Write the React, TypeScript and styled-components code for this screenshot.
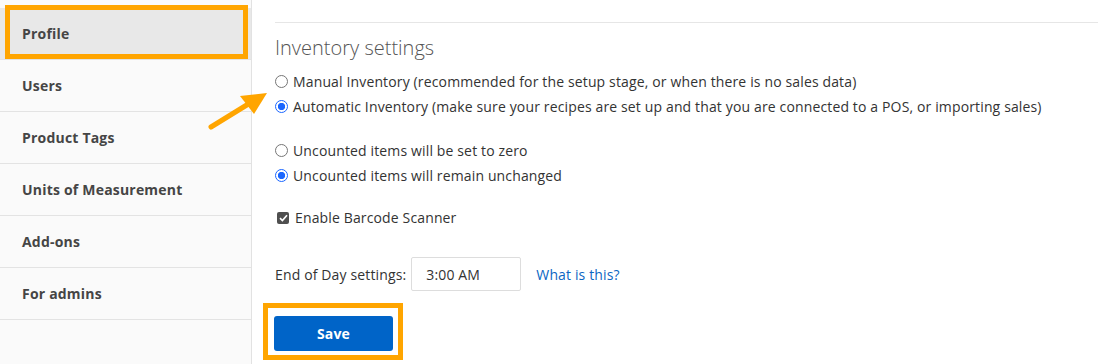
import styled, { createGlobalStyle } from "styled-components";

const GlobalStyle = createGlobalStyle`
  html, body {
    margin: 0;
    padding: 0;
    background: #ffffff;
  }
  body {
    font-family: "Open Sans", "Liberation Sans", sans-serif;
    color: #333333;
  }
`;

const ANNOTATION = "#ffa500";

const Page = styled.div`
  position: relative;
  display: grid;
  grid-template-columns: 252px 1fr;
  height: 364px;
  overflow: hidden;
`;

const Sidebar = styled.nav`
  background: #fafafa;
  border-right: 1px solid #e2e2e2;
  padding-top: 8px;
`;

const NavList = styled.ul`
  list-style: none;
  margin: 0;
  padding: 0;
`;

const NavItem = styled.li<{ $active?: boolean; $marked?: boolean }>`
  position: relative;
  height: 52px;
  box-sizing: border-box;
  display: flex;
  align-items: center;
  padding-left: 22px;
  border-bottom: 1px solid #e3e3e3;
  background: ${({ $active }) => ($active ? "#e8e8e8" : "transparent")};
  font-size: 14px;
  font-weight: 700;
  letter-spacing: 0.2px;
  color: #454545;

  &::after {
    content: "";
    display: ${({ $marked }) => ($marked ? "block" : "none")};
    position: absolute;
    top: -3px;
    left: 5px;
    right: 3px;
    bottom: 0;
    border: 5px solid ${ANNOTATION};
  }
`;

const Main = styled.main`
  padding-left: 23px;
  padding-top: 22px;
  display: flex;
  flex-direction: column;
  align-items: flex-start;
  letter-spacing: 0.14px;
`;

const Divider = styled.hr`
  align-self: stretch;
  margin: 0 1px 0 0;
  border: 0;
  border-top: 1px solid #e6e6e6;
`;

const Heading = styled.h2`
  margin: 10px 0 6px;
  font-size: 20px;
  line-height: 30px;
  font-weight: 300;
  letter-spacing: 0;
  color: #555555;
`;

const OptionGroup = styled.div<{ $gapAfter: number }>`
  display: flex;
  flex-direction: column;
  margin-bottom: ${({ $gapAfter }) => $gapAfter}px;
`;

const OptionRow = styled.label`
  display: flex;
  align-items: center;
  height: 25px;
  font-size: 14px;
  color: #333333;
`;

const Radio = styled.span<{ $checked?: boolean }>`
  box-sizing: border-box;
  width: 13px;
  height: 13px;
  margin-right: 5px;
  border-radius: 50%;
  border: 1px solid ${({ $checked }) => ($checked ? "#1a66ff" : "#767676")};
  background: ${({ $checked }) =>
    $checked
      ? "radial-gradient(circle, #1a66ff 0 3.4px, #ffffff 3.9px)"
      : "#ffffff"};
  flex-shrink: 0;
`;

const CheckRow = styled.label`
  display: flex;
  align-items: center;
  height: 25px;
  padding-left: 2px;
  font-size: 14px;
  color: #333333;
  margin-bottom: 27px;
`;

const CheckBox = styled.span`
  box-sizing: border-box;
  width: 12px;
  height: 12px;
  margin-right: 6px;
  border-radius: 2px;
  background: #4f4f4f;
  display: flex;
  align-items: center;
  justify-content: center;
`;

const FieldRow = styled.div`
  display: flex;
  align-items: center;
  font-size: 14px;
  color: #333333;
  margin-bottom: 12px;
`;

const FieldLabel = styled.span`
  margin-right: 5px;
`;

const TimeInput = styled.div`
  box-sizing: border-box;
  width: 110px;
  height: 34px;
  border: 1px solid #dddddd;
  border-radius: 2px;
  padding-left: 14px;
  display: flex;
  align-items: center;
  margin-right: 15px;
`;

const HelpLink = styled.a`
  color: #0b66c3;
  text-decoration: none;
`;

const MarkFrame = styled.div`
  margin-left: -12px;
  border: 5px solid ${ANNOTATION};
  padding: 8px 5px 4px 6px;
`;

const SaveButton = styled.button`
  width: 119px;
  height: 35px;
  border: 0;
  border-radius: 3px;
  background: #0064c8;
  color: #ffffff;
  font-family: inherit;
  font-size: 14px;
  font-weight: 700;
  letter-spacing: 0.2px;
`;

const ArrowMark = styled.svg`
  position: absolute;
  left: 200px;
  top: 84px;
`;

function CheckIcon() {
  return (
    <svg width="9" height="8" viewBox="0 0 9 8">
      <path d="M1 4.2 L3.4 6.5 L8 1.3" stroke="#fff" strokeWidth="1.7" fill="none" />
    </svg>
  );
}

const navItems = [
  "Profile",
  "Users",
  "Product Tags",
  "Units of Measurement",
  "Add-ons",
  "For admins",
];

export default function App() {
  return (
    <>
      <GlobalStyle />
      <Page>
        <Sidebar>
          <NavList>
            {navItems.map((item, i) => (
              <NavItem key={item} $active={i === 0} $marked={i === 0}>
                {item}
              </NavItem>
            ))}
          </NavList>
        </Sidebar>
        <Main>
          <Divider />
          <Heading>Inventory settings</Heading>
          <OptionGroup $gapAfter={19}>
            <OptionRow>
              <Radio />
              Manual Inventory (recommended for the setup stage, or when there is no sales data)
            </OptionRow>
            <OptionRow>
              <Radio $checked />
              Automatic Inventory (make sure your recipes are set up and that you are connected to a POS, or importing sales)
            </OptionRow>
          </OptionGroup>
          <OptionGroup $gapAfter={17}>
            <OptionRow>
              <Radio />
              Uncounted items will be set to zero
            </OptionRow>
            <OptionRow>
              <Radio $checked />
              Uncounted items will remain unchanged
            </OptionRow>
          </OptionGroup>
          <CheckRow>
            <CheckBox>
              <CheckIcon />
            </CheckBox>
            Enable Barcode Scanner
          </CheckRow>
          <FieldRow>
            <FieldLabel>End of Day settings:</FieldLabel>
            <TimeInput>3:00 AM</TimeInput>
            <HelpLink href="#">What is this?</HelpLink>
          </FieldRow>
          <MarkFrame>
            <SaveButton>Save</SaveButton>
          </MarkFrame>
        </Main>
        <ArrowMark width="72" height="48" viewBox="0 0 72 48">
          <path d="M11 43 L50 19" stroke={ANNOTATION} strokeWidth="5" strokeLinecap="round" />
          <polygon points="67,9 40,12 54,30" fill={ANNOTATION} />
        </ArrowMark>
      </Page>
    </>
  );
}
